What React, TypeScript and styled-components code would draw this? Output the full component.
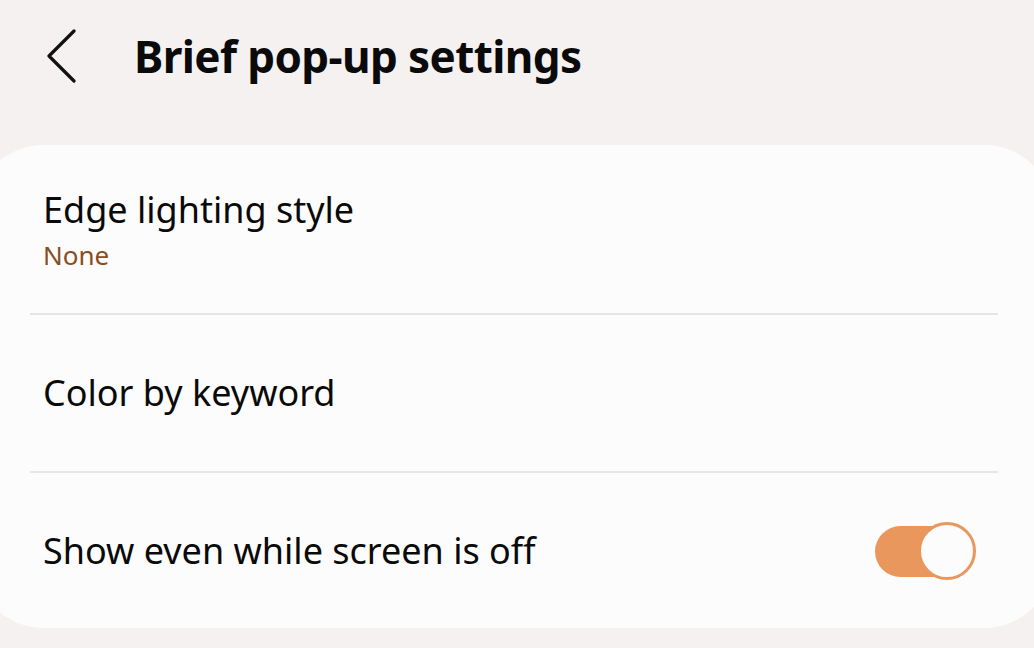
import React from "react";
import styled, { createGlobalStyle } from "styled-components";

const Global = createGlobalStyle`
  html, body { margin: 0; padding: 0; }
  body {
    background: #f4f1f0;
    font-family: "Noto Sans", Roboto, "Liberation Sans", sans-serif;
    overflow: hidden;
    width: 1034px;
    height: 648px;
  }
`;

const Page = styled.div`
  display: flex;
  flex-direction: column;
  width: 1034px;
  height: 648px;
  background: #f4f1f0;
`;

const Header = styled.header`
  display: flex;
  align-items: center;
  height: 112px;
  margin-bottom: 33px;
  padding-left: 46px;
  gap: 56px;
`;

const BackButton = styled.button`
  display: flex;
  align-items: center;
  justify-content: center;
  width: 32px;
  height: 54px;
  padding: 0;
  border: none;
  background: transparent;
  cursor: pointer;
`;

const Title = styled.h1`
  margin: 0;
  font-size: 44px;
  font-weight: 700;
  color: #0a0a0a;
  letter-spacing: -0.6px;
`;

const Card = styled.section`
  display: flex;
  flex-direction: column;
  margin: 0 -20px 0 -26px;
  padding: 0 56px;
  background: #fcfcfc;
  border-radius: 70px;
  height: 483px;
`;

const Row = styled.div<{ $height: number }>`
  display: flex;
  align-items: center;
  justify-content: space-between;
  height: ${(p) => p.$height}px;
  padding: 0 21px 0 13px;
`;

const Divider = styled.div`
  height: 2px;
  background: #e7e6e6;
`;

const TextBlock = styled.div`
  display: flex;
  flex-direction: column;
  gap: 7px;
`;

const Label = styled.span`
  font-size: 36px;
  color: #0a0a0a;
  line-height: 44px;
`;

const Sub = styled.span`
  font-size: 26px;
  color: #8a4c22;
  line-height: 32px;
`;

const Track = styled.button<{ $on: boolean }>`
  position: relative;
  width: 102px;
  height: 58px;
  padding: 0;
  border: none;
  background: transparent;
  cursor: pointer;
  &::before {
    content: "";
    position: absolute;
    left: 0;
    top: 4px;
    width: 90px;
    height: 51px;
    border-radius: 26px;
    background: ${(p) => (p.$on ? "#e9975c" : "#c8c8c8")};
  }
`;

const Thumb = styled.span<{ $on: boolean }>`
  position: absolute;
  top: 0;
  left: ${(p) => (p.$on ? "43px" : "0")};
  width: 58px;
  height: 58px;
  box-sizing: border-box;
  border-radius: 50%;
  border: 3px solid #e9975c;
  background: #fcfcfc;
`;

function Chevron() {
  return (
    <svg width="32" height="54" viewBox="0 0 32 54" fill="none">
      <path
        d="M28 2 L3 27 L28 52"
        stroke="#111"
        strokeWidth="3.2"
        strokeLinecap="round"
        strokeLinejoin="round"
      />
    </svg>
  );
}

export default function App() {
  return (
    <>
      <Global />
      <Page>
        <Header>
          <BackButton aria-label="Back">
            <Chevron />
          </BackButton>
          <Title>Brief pop-up settings</Title>
        </Header>
        <Card>
          <Row $height={168}>
            <TextBlock>
              <Label>Edge lighting style</Label>
              <Sub>None</Sub>
            </TextBlock>
          </Row>
          <Divider />
          <Row $height={156}>
            <Label>Color by keyword</Label>
          </Row>
          <Divider />
          <Row $height={155}>
            <Label>Show even while screen is off</Label>
            <Track $on={true} aria-label="toggle">
              <Thumb $on={true} />
            </Track>
          </Row>
        </Card>
      </Page>
    </>
  );
}
